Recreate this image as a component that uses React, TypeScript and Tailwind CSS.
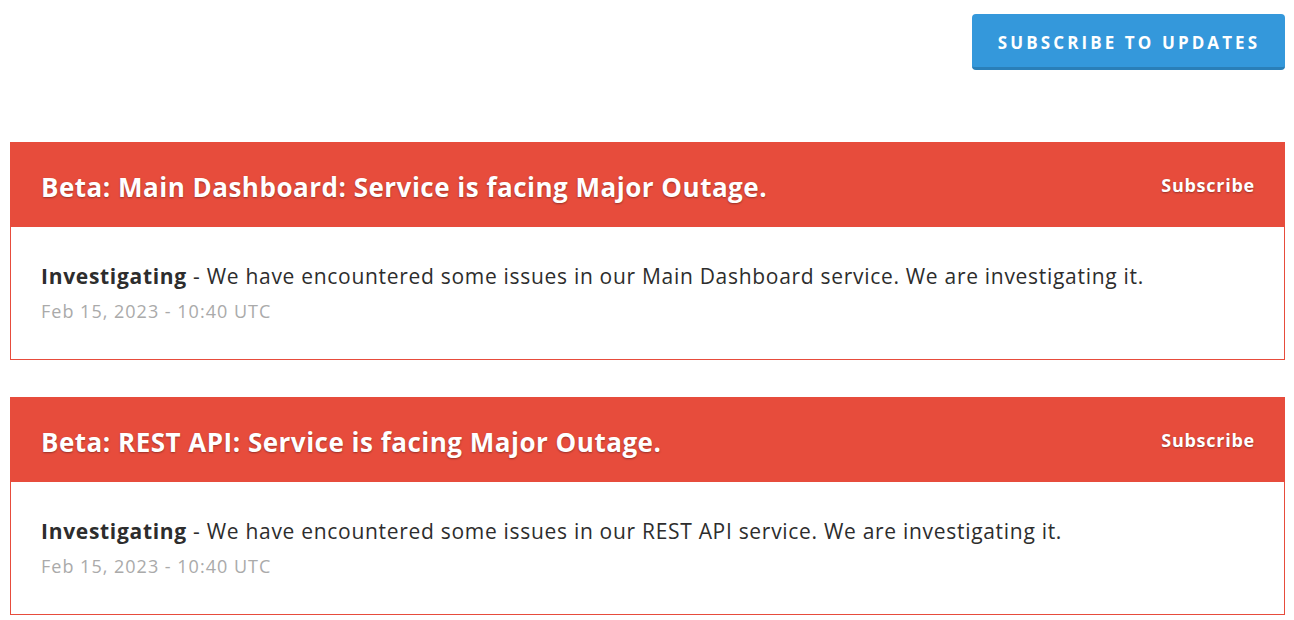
const incidents = [
  {
    title: "Beta: Main Dashboard: Service is facing Major Outage.",
    text: "We have encountered some issues in our Main Dashboard service. We are investigating it.",
    date: "Feb 15, 2023 - 10:40 UTC",
  },
  {
    title: "Beta: REST API: Service is facing Major Outage.",
    text: "We have encountered some issues in our REST API service. We are investigating it.",
    date: "Feb 15, 2023 - 10:40 UTC",
  },
];

const App = () => {
  return (
    <div className="min-h-screen bg-white px-[10px] pt-[14px] font-['Open_Sans',sans-serif]">
      <div className="flex justify-end mr-[-1px]">
        <button className="h-[56px] w-[313px] rounded-[4px] bg-[#3498db] border-b-[3px] border-[#2a7fb8] text-white text-[17px] font-bold tracking-[3.1px] uppercase pl-[1px] pt-[4px]">
          Subscribe to updates
        </button>
      </div>

      <div className="mt-[72px] flex flex-col gap-[37px] mr-[-1px]">
        {incidents.map((item, i) => (
          <div key={i} className="border border-[#e74c3c]">
            <div className="h-[84px] bg-[#e74c3c] flex items-center justify-between pl-[30px] pr-[29px]">
              <h2 className="text-white text-[26px] font-bold tracking-[0.5px] [text-shadow:0_1px_2px_rgba(0,0,0,0.35)] mt-[4px]">
                {item.title}
              </h2>
              <span className="text-white text-[18px] font-bold tracking-[0.75px] [text-shadow:0_1px_2px_rgba(0,0,0,0.35)]">
                Subscribe
              </span>
            </div>
            <div className="pl-[30px] pt-[35px] pb-[36px]">
              <p className="text-[#2d2d2d] text-[21px] leading-[28px] tracking-[0.7px]">
                <strong className="font-bold">Investigating</strong> - {item.text}
              </p>
              <p className="text-[#aaaaaa] text-[18px] leading-[24px] mt-[9px] tracking-[1px]">{item.date}</p>
            </div>
          </div>
        ))}
      </div>
    </div>
  );
};

export default App;
